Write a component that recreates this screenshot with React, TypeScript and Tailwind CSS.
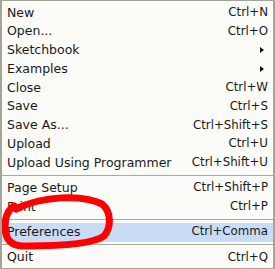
import React from 'react'

type Item =
  | { kind: 'item'; label: string; shortcut?: string; submenu?: boolean; active?: boolean }
  | { kind: 'sep' }

const items: Item[] = [
  { kind: 'item', label: 'New', shortcut: 'Ctrl+N' },
  { kind: 'item', label: 'Open...', shortcut: 'Ctrl+O' },
  { kind: 'item', label: 'Sketchbook', submenu: true },
  { kind: 'item', label: 'Examples', submenu: true },
  { kind: 'item', label: 'Close', shortcut: 'Ctrl+W' },
  { kind: 'item', label: 'Save', shortcut: 'Ctrl+S' },
  { kind: 'item', label: 'Save As...', shortcut: 'Ctrl+Shift+S' },
  { kind: 'item', label: 'Upload', shortcut: 'Ctrl+U' },
  { kind: 'item', label: 'Upload Using Programmer', shortcut: 'Ctrl+Shift+U' },
  { kind: 'sep' },
  { kind: 'item', label: 'Page Setup', shortcut: 'Ctrl+Shift+P' },
  { kind: 'item', label: 'Print', shortcut: 'Ctrl+P' },
  { kind: 'sep' },
  { kind: 'item', label: 'Preferences', shortcut: 'Ctrl+Comma', active: true },
  { kind: 'sep' },
  { kind: 'item', label: 'Quit', shortcut: 'Ctrl+Q' },
]

export default function App() {
  return (
    <div className="relative w-[275px] h-[269px] bg-[#fbfbf8] border border-[#a5a597] border-l-2 border-r-2 font-['DejaVu_Sans',sans-serif] text-[#1a1a1a] text-[12.5px] overflow-hidden">
      <div className="flex flex-col pt-[2.5px]">
        {items.map((it, i) =>
          it.kind === 'sep' ? (
            <div key={i} className="h-[6.5px] flex flex-col justify-center">
              <div className="h-px bg-[#a9a99c]" />
              <div className="h-px bg-white" />
            </div>
          ) : (
            <div
              key={i}
              className={
                'h-[18.75px] flex items-center justify-between pl-[5px] pr-[5px] ' +
                (it.active ? 'bg-[#c8dcf6]' : '')
              }
            >
              <span>{it.label}</span>
              {it.submenu ? (
                <span className="w-0 h-0 border-y-[3.5px] border-y-transparent border-l-[4px] border-l-[#111] mr-[4px]" />
              ) : (
                <span className="text-[11.8px]">{it.shortcut}</span>
              )}
            </div>
          )
        )}
      </div>
      <svg className="absolute left-0 top-0 pointer-events-none" width="275" height="269">
        <path
          d="M14 208 C 40 195, 80 193, 100 203 C 110 211, 109 227, 102 235 C 92 243, 60 245, 22 245 C 8 245, 3 237, 3 225 C 3 215, 6 209, 12 205"
          fill="none"
          stroke="#ff0000"
          strokeWidth="7"
          strokeLinecap="round"
        />
      </svg>
    </div>
  )
}
